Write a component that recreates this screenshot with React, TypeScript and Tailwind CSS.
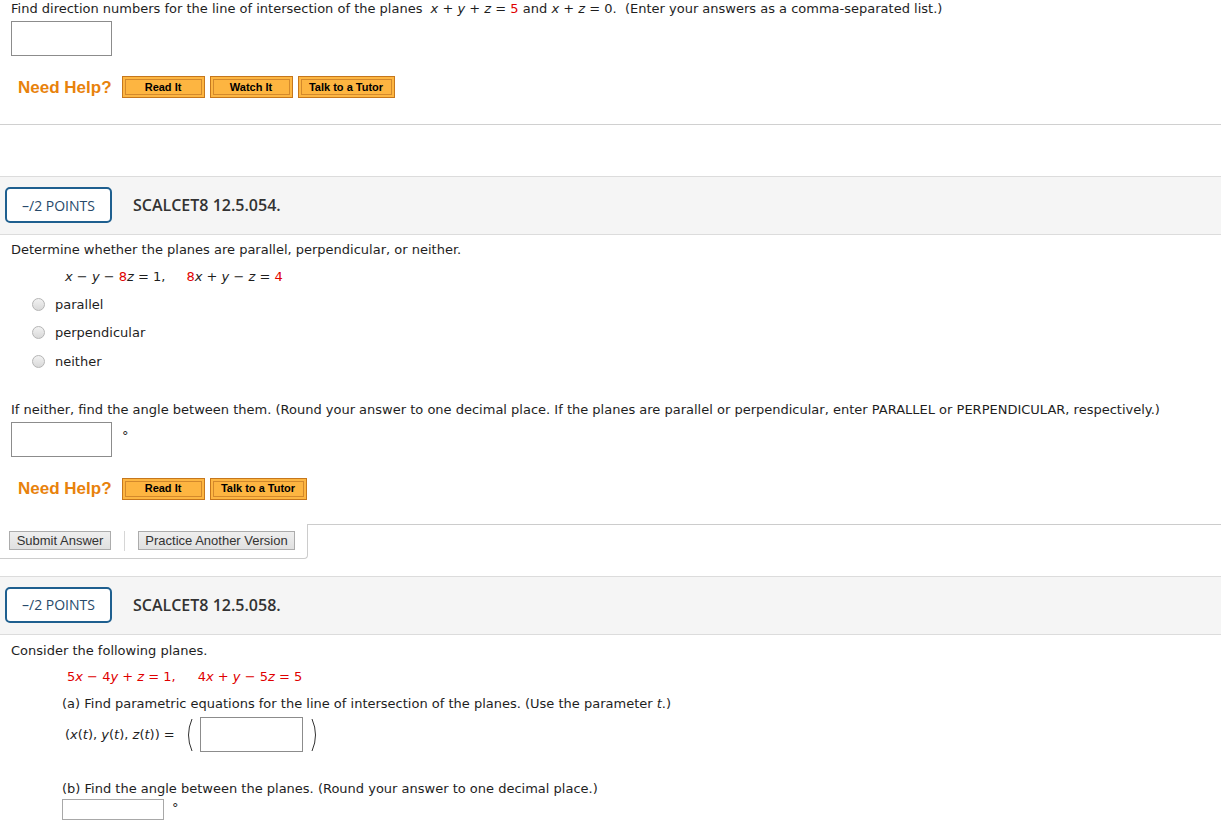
const verdana = '[font-family:"DejaVu_Sans",Verdana,sans-serif]';

function OrangeButton({ label, width }: { label: string; width: string }) {
  return (
    <button
      className={`${width} h-[22px] border border-[#c6771c] bg-[#fdb642] p-[2px] [font-family:"Liberation_Sans",Arial,sans-serif] text-[11px] font-bold text-black`}
    >
      <span className="flex h-full w-full items-center justify-center border border-[#d3892c] bg-[#fdb541] leading-none">
        {label}
      </span>
    </button>
  );
}

function NeedHelp({ buttons }: { buttons: { label: string; width: string }[] }) {
  return (
    <div className="flex h-[22px] items-center">
      <span className="ml-[7px] mr-[10px] [font-family:'Liberation_Sans',Arial,sans-serif] text-[17px] font-bold leading-none text-[#e8820c]">
        Need Help?
      </span>
      <div className="flex gap-[5px]">
        {buttons.map((b) => (
          <OrangeButton key={b.label} label={b.label} width={b.width} />
        ))}
      </div>
    </div>
  );
}

function AnswerBox({ className = '' }: { className?: string }) {
  return <div className={`border border-[#8c8c8c] bg-white ${className}`} />;
}

function PointsHeader({ code }: { code: string }) {
  return (
    <div className="flex items-center border-y border-[#dcdcdc] bg-[#f5f5f5] pt-[10px] pb-[11px]">
      <div className="ml-[5px] flex h-[36px] w-[107px] items-center justify-center rounded-[5px] border-2 border-[#1e5f8f] bg-white [font-family:'Open_Sans',sans-serif] text-[14px] text-[#27496a]">
        –/2 POINTS
      </div>
      <div className="ml-[21px] [font-family:'Open_Sans',sans-serif] text-[16px] font-semibold text-[#333]">
        {code}
      </div>
    </div>
  );
}

function Radio({ label }: { label: string }) {
  return (
    <div className="flex h-[28.5px] items-center pl-[21px]">
      <span className="h-[13px] w-[13px] rounded-full border border-[#b5b5b5] bg-gradient-to-b from-[#f2f2f2] to-[#d9d9d9]" />
      <span className="ml-[10px]">{label}</span>
    </div>
  );
}

const red = 'text-[#e00000]';

function Paren({ flip = false }: { flip?: boolean }) {
  return (
    <svg width="10" height="36" viewBox="0 0 10 36" className={flip ? 'scale-x-[-1]' : ''}>
      <path d="M8 2 Q1 18 8 34" fill="none" stroke="#333" strokeWidth="1" />
    </svg>
  );
}

export default function App() {
  return (
    <div className={`${verdana} min-h-[831px] w-[1221px] bg-white text-[13px] text-[#1e1e1e]`}>
      {/* previous question tail */}
      <div className="px-[11px]">
        <p className="h-[18px] leading-[18px]">
          Find direction numbers for the line of intersection of the planes{' '}
          <i className="ml-[4px]">x</i> + <i>y</i> + <i>z</i> = <span className={red}>5</span> and{' '}
          <i>x</i> + <i>z</i> = 0.&nbsp; (Enter your answers as a comma-separated list.)
        </p>
        <AnswerBox className="mt-[3px] h-[35px] w-[101px]" />
        <div className="mt-[20px]">
          <NeedHelp
            buttons={[
              { label: 'Read It', width: 'w-[83px]' },
              { label: 'Watch It', width: 'w-[83px]' },
              { label: 'Talk to a Tutor', width: 'w-[97px]' },
            ]}
          />
        </div>
      </div>
      <div className="mt-[26px] border-t border-[#d0d0d0]" />

      {/* 12.5.054 */}
      <div className="mt-[51px]">
        <PointsHeader code="SCALCET8 12.5.054." />
      </div>
      <div className="px-[11px] pt-[6px]">
        <p className="h-[18px] leading-[18px]">Determine whether the planes are parallel, perpendicular, or neither.</p>
        <p className="mt-[9px] h-[18px] pl-[54px] leading-[18px]">
          <i>x</i> − <i>y</i> − <span className={red}>8</span>
          <i>z</i> = 1,
          <span className="ml-[21px]">
            <span className={red}>8</span>
            <i>x</i> + <i>y</i> − <i>z</i> = <span className={red}>4</span>
          </span>
        </p>
        <div className="mt-[4px]">
          <Radio label="parallel" />
          <Radio label="perpendicular" />
          <Radio label="neither" />
        </div>
        <p className="mt-[25px] h-[18px] leading-[18px]">
          If neither, find the angle between them. (Round your answer to one decimal place. If the planes are parallel
          or perpendicular, enter PARALLEL or PERPENDICULAR, respectively.)
        </p>
        <div className="mt-[3px] flex items-center">
          <AnswerBox className="h-[35px] w-[101px]" />
          <span className="ml-[10px] -mt-[6px] text-[13px]">°</span>
        </div>
        <div className="mt-[21px]">
          <NeedHelp
            buttons={[
              { label: 'Read It', width: 'w-[83px]' },
              { label: 'Talk to a Tutor', width: 'w-[97px]' },
            ]}
          />
        </div>
      </div>

      {/* submit row */}
      <div className="mt-[24px] flex">
        <div className="flex h-[35px] w-[308px] items-center rounded-br-[4px] border-r border-b border-[#cccccc] pl-[9px] [font-family:'Liberation_Sans',Arial,sans-serif] text-[13px] text-[#333]">
          <button className="h-[19px] w-[102px] border border-[#acacac] bg-gradient-to-b from-[#efefef] to-[#e0e0e0] leading-none">
            Submit Answer
          </button>
          <span className="mx-[13px] h-[20px] border-l border-[#d6d6d6]" />
          <button className="h-[19px] w-[157px] border border-[#acacac] bg-gradient-to-b from-[#efefef] to-[#e0e0e0] leading-none">
            Practice Another Version
          </button>
        </div>
        <div className="flex-1 border-t border-[#cccccc]" />
      </div>

      {/* 12.5.058 */}
      <div className="mt-[17px]">
        <PointsHeader code="SCALCET8 12.5.058." />
      </div>
      <div className="px-[11px] pt-[7px]">
        <p className="h-[18px] leading-[18px]">Consider the following planes.</p>
        <p className={`mt-[8px] h-[18px] pl-[56px] leading-[18px] ${red}`}>
          5<i>x</i> − 4<i>y</i> + <i>z</i> = 1,
          <span className="ml-[22px]">
            4<i>x</i> + <i>y</i> − 5<i>z</i> = 5
          </span>
        </p>
        <div className="pl-[51px]">
          <p className="mt-[9px] h-[18px] leading-[18px]">
            (a) Find parametric equations for the line of intersection of the planes. (Use the parameter <i>t</i>.)
          </p>
          <div className="mt-[4px] flex items-center">
            <span className="pl-[3px]">
              (<i>x</i>(<i>t</i>), <i>y</i>(<i>t</i>), <i>z</i>(<i>t</i>)) =
            </span>
            <span className="ml-[9px]">
              <Paren />
            </span>
            <AnswerBox className="ml-[6px] h-[35px] w-[103px]" />
            <span className="ml-[7px]">
              <Paren flip />
            </span>
          </div>
          <p className="mt-[27px] h-[18px] leading-[18px]">
            (b) Find the angle between the planes. (Round your answer to one decimal place.)
          </p>
          <div className="mt-[1px] flex items-center">
            <AnswerBox className="h-[21px] w-[102px] border-[#a8a8a8]" />
            <span className="ml-[8px] -mt-[2px]">°</span>
          </div>
        </div>
      </div>
    </div>
  );
}
